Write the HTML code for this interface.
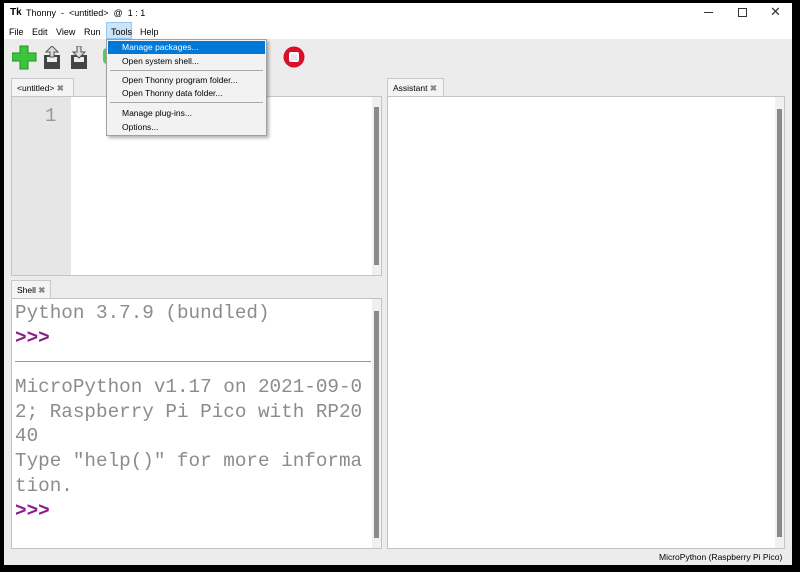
<!DOCTYPE html>
<html><head><style>
*{margin:0;padding:0;box-sizing:border-box}
body{width:800px;height:572px;background:#000;position:relative;overflow:hidden;font-family:"Liberation Sans",sans-serif;font-size:9px;color:#000}
.win{position:absolute;left:4px;top:3px;width:788px;height:562px;background:#ececec}
.abs{position:absolute}
.title{left:0;top:0;width:788px;height:19px;background:#fff}
.menu{left:0;top:19px;width:788px;height:17px;background:#fff}
.menu span{position:absolute;top:5px}
.tab{position:absolute;background:#f4f4f4;border:1px solid #c8c8c8;border-bottom:none;font-size:8.5px;padding:4px 5px;white-space:nowrap}
.pane{position:absolute;background:#fff;border:1px solid #c4c4c4}
.mono{font-family:"Liberation Mono",monospace;font-size:19.3px;color:#8c8c8c;position:absolute;left:10px;white-space:pre;line-height:24.7px}
.p{color:#8b1a8b;font-weight:bold}
.dd{left:102px;top:36px;width:161px;height:97px;background:#f2f2f2;border:1px solid #a0a0a0;box-shadow:2px 2px 3px rgba(0,0,0,.3)}
.dd div{position:absolute;left:15px;font-size:8.5px}
.sb{position:absolute;width:9px;background:#f0f0f0}
.sb i{position:absolute;left:2px;width:5px;background:#8a8a8a}
</style></head><body>
<div class="win">
 <div class="abs title">
  <span class="abs" style="left:6px;top:4px;font-weight:bold;font-size:10px">Tk</span>
  <span class="abs" style="left:22px;top:5px;font-size:9px">Thonny &nbsp;-&nbsp; &lt;untitled&gt; &nbsp;@ &nbsp;1 : 1</span>
  <span class="abs" style="left:700px;top:9px;width:9px;height:1px;background:#333"></span>
  <span class="abs" style="left:734px;top:5px;width:9px;height:9px;border:1px solid #333"></span>
  <span class="abs" style="left:766px;top:1px;font-size:13px;color:#333">✕</span>
 </div>
 <div class="abs menu">
  <span style="left:5px">File</span><span style="left:28px">Edit</span><span style="left:52px">View</span><span style="left:80px">Run</span>
  <span style="left:102px;top:0;width:26px;height:17px;background:#cce4f7;border:1px solid #99c9ef"></span>
  <span style="left:107px">Tools</span><span style="left:136px">Help</span>
 </div>
 <svg class="abs" style="left:8px;top:42px" width="26" height="26"><path d="M8 1h8v7h8v8h-8v8h-8v-8h-8v-8h8z" fill="#3cc43c" stroke="#1f8f1f"/></svg>
 <svg class="abs" style="left:38px;top:43px" width="20" height="24"><path d="M2 9h16v14h-16z" fill="#444"/><path d="M5 11h10v5h-10z" fill="#eee"/><path d="M10 0l6 6h-4v5h-4v-5h-4z" fill="#ddd" stroke="#555"/></svg>
 <svg class="abs" style="left:65px;top:43px" width="20" height="24"><path d="M2 9h16v14h-16z" fill="#444"/><path d="M5 11h10v5h-10z" fill="#eee"/><path d="M8 0h4v6h4l-6 6l-6-6h4z" fill="#ddd" stroke="#555"/></svg>
 <div class="abs" style="left:99px;top:45px;width:4px;height:16px;background:#5c5;border-radius:4px 0 0 4px"></div>
 <svg class="abs" style="left:279px;top:43px" width="22" height="22"><circle cx="11" cy="11" r="10.5" fill="#d8102c"/><rect x="6" y="6" width="10" height="10" rx="2" fill="#fff" /><rect x="8" y="8" width="6" height="6" fill="#e8e8e8"/></svg>
 <div class="tab" style="left:7px;top:75px;width:63px;height:18px">&lt;untitled&gt; <b style="color:#888">✖</b></div>
 <div class="pane" style="left:7px;top:93px;width:371px;height:180px">
  <div class="abs" style="left:0;top:0;width:59px;height:178px;background:#e6e6e6"></div>
  <div class="abs" style="left:33px;top:8px;font-size:19px;color:#999;font-family:'Liberation Mono',monospace">1</div>
  <div class="sb" style="right:0;top:0;height:178px"><i style="top:10px;height:158px"></i></div>
 </div>
 <div class="tab" style="left:7px;top:277px;width:40px;height:18px">Shell <b style="color:#888">✖</b></div>
 <div class="pane" style="left:7px;top:295px;width:371px;height:251px">
  <div class="mono" style="left:3px;top:2px">Python 3.7.9 (bundled)
<span class="p">&gt;&gt;&gt;</span></div>
  <div class="abs" style="left:3px;top:62px;width:356px;height:1px;background:#999"></div>
  <div class="mono" style="left:3px;top:76px">MicroPython v1.17 on 2021-09-0
2; Raspberry Pi Pico with RP20
40
Type "help()" for more informa
tion.
<span class="p">&gt;&gt;&gt;</span></div>
  <div class="sb" style="right:0;top:0;height:249px"><i style="top:12px;height:227px"></i></div>
 </div>
 <div class="tab" style="left:383px;top:75px;width:57px;height:18px">Assistant <b style="color:#888">✖</b></div>
 <div class="pane" style="left:383px;top:93px;width:398px;height:453px">
  <div class="sb" style="right:0;top:0;height:451px"><i style="top:12px;height:428px"></i></div>
 </div>
 <div class="abs" style="left:655px;top:549px;font-size:8.5px">MicroPython (Raspberry Pi Pico)</div>
 <div class="abs dd">
  <div style="left:1px;top:1px;width:157px;height:13px;background:#0078d7"></div>
  <div style="top:2px;color:#fff">Manage packages...</div>
  <div style="top:16px">Open system shell...</div>
  <div style="left:3px;top:30px;width:153px;height:1px;background:#aaa"></div>
  <div style="top:35px">Open Thonny program folder...</div>
  <div style="top:48px">Open Thonny data folder...</div>
  <div style="left:3px;top:62px;width:153px;height:1px;background:#aaa"></div>
  <div style="top:68px">Manage plug-ins...</div>
  <div style="top:82px">Options...</div>
 </div>
</div>
</body></html>
